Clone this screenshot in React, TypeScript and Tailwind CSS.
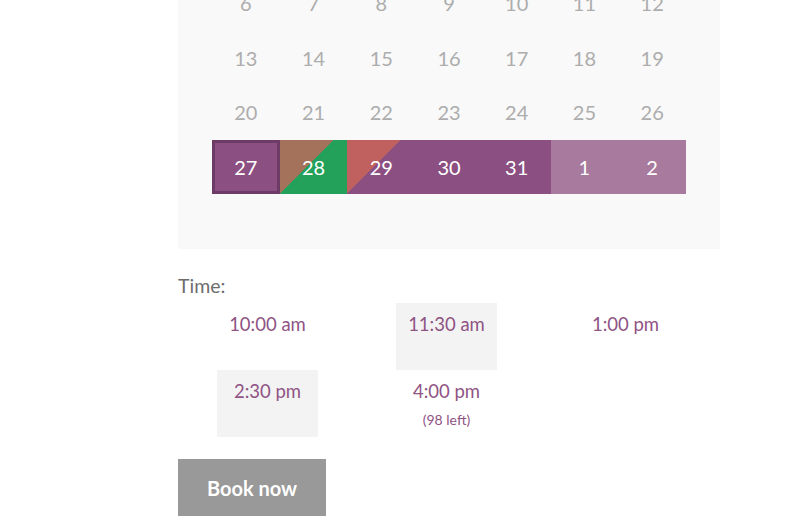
import React from "react";

const rows: number[][] = [
  [6, 7, 8, 9, 10, 11, 12],
  [13, 14, 15, 16, 17, 18, 19],
  [20, 21, 22, 23, 24, 25, 26],
];

export default function App() {
  return (
    <div
      className="w-[800px] h-[525px] overflow-hidden bg-white"
      style={{ fontFamily: "Lato, 'Noto Sans', sans-serif" }}
    >
      <div className="ml-[178px] w-[542px]">
        {/* calendar panel (page scrolled: top is cut off) */}
        <div className="mt-[-24px] bg-[#f9f9f9] pl-[34px] pr-[34px] pb-[55px]">
          <div className="w-[474px]">
            {rows.map((r, i) => (
              <div key={i} className="grid grid-cols-7 h-[54.5px]">
                {r.map((d) => (
                  <div
                    key={d}
                    className="flex items-center justify-center text-[20px] text-[#adadad]"
                  >
                    {d}
                  </div>
                ))}
              </div>
            ))}
            <div className="grid grid-cols-7 h-[54.5px] text-[20px] text-white">
              <div className="flex items-center justify-center bg-[#8c4f82] border-[3px] border-[#6d3b66]">
                27
              </div>
              <div
                className="flex items-center justify-center"
                style={{
                  background:
                    "linear-gradient(135deg, #a4715a 0%, #a4715a 44%, #23a15a 44%, #23a15a 100%)",
                }}
              >
                28
              </div>
              <div
                className="flex items-center justify-center"
                style={{
                  background:
                    "linear-gradient(135deg, #c0605f 0%, #c0605f 44%, #8c4f82 44%, #8c4f82 100%)",
                }}
              >
                29
              </div>
              <div className="flex items-center justify-center bg-[#8c4f82]">30</div>
              <div className="flex items-center justify-center bg-[#8c4f82]">31</div>
              <div className="flex items-center justify-center bg-[#a77a9e]">1</div>
              <div className="flex items-center justify-center bg-[#a77a9e]">2</div>
            </div>
          </div>
        </div>

        {/* time */}
        <div className="mt-[25px] text-[19.5px] leading-[24px] text-[#6d6d6d]">Time:</div>
        <div className="mt-[5px] grid grid-cols-3 w-[537px] text-[#8f5384]">
          <Slot label="10:00 am" />
          <Slot label="11:30 am" shaded />
          <Slot label="1:00 pm" />
          <Slot label="2:30 pm" shaded />
          <Slot label="4:00 pm" sub="(98 left)" />
          <div />
        </div>

        <button className="mt-[22px] w-[148px] h-[57px] bg-[#999999] text-white text-[20px] font-bold flex items-center justify-center">
          Book now
        </button>
      </div>
    </div>
  );
}

function Slot({ label, sub, shaded }: { label: string; sub?: string; shaded?: boolean }) {
  return (
    <div className="flex justify-center">
      <div
        className={
          "w-[101px] h-[67px] pt-[9px] flex flex-col items-center " +
          (shaded ? "bg-[#f3f3f3]" : "")
        }
      >
        <div className="text-[18.5px] leading-[24px]">{label}</div>
        {sub ? <div className="mt-[8px] text-[14px] leading-[18px]">{sub}</div> : null}
      </div>
    </div>
  );
}
